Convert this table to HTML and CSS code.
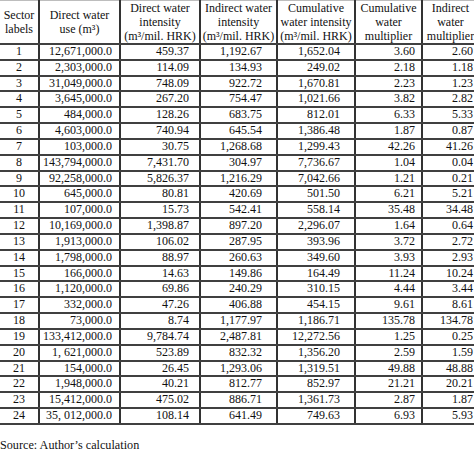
FILE: index.html
```html
<!DOCTYPE html>
<html>
<head>
<meta charset="utf-8">
<link rel="stylesheet" href="styles.css">
</head>
<body>
<div class="page">
  <div class="table-wrap">
    <table class="data">
      <colgroup>
        <col class="c1"><col class="c2"><col class="c3"><col class="c4"><col class="c5"><col class="c6"><col class="c7">
      </colgroup>
      <thead>
        <tr>
          <th>Sector<br>labels</th>
          <th>Direct water<br>use (m³)</th>
          <th>Direct water<br>intensity<br>(m³/mil. HRK)</th>
          <th>Indirect water<br>intensity<br>(m³/mil. HRK)</th>
          <th>Cumulative<br>water intensity<br>(m³/mil. HRK)</th>
          <th>Cumulative<br>water<br>multiplier</th>
          <th>Indirect<br>water<br>multiplier</th>
        </tr>
      </thead>
      <tbody>
        <tr><td>1</td><td>12,671,000.0</td><td>459.37</td><td>1,192.67</td><td>1,652.04</td><td>3.60</td><td>2.60</td></tr>
        <tr><td>2</td><td>2,303,000.0</td><td>114.09</td><td>134.93</td><td>249.02</td><td>2.18</td><td>1.18</td></tr>
        <tr><td>3</td><td>31,049,000.0</td><td>748.09</td><td>922.72</td><td>1,670.81</td><td>2.23</td><td>1.23</td></tr>
        <tr><td>4</td><td>3,645,000.0</td><td>267.20</td><td>754.47</td><td>1,021.66</td><td>3.82</td><td>2.82</td></tr>
        <tr><td>5</td><td>484,000.0</td><td>128.26</td><td>683.75</td><td>812.01</td><td>6.33</td><td>5.33</td></tr>
        <tr><td>6</td><td>4,603,000.0</td><td>740.94</td><td>645.54</td><td>1,386.48</td><td>1.87</td><td>0.87</td></tr>
        <tr><td>7</td><td>103,000.0</td><td>30.75</td><td>1,268.68</td><td>1,299.43</td><td>42.26</td><td>41.26</td></tr>
        <tr><td>8</td><td>143,794,000.0</td><td>7,431.70</td><td>304.97</td><td>7,736.67</td><td>1.04</td><td>0.04</td></tr>
        <tr><td>9</td><td>92,258,000.0</td><td>5,826.37</td><td>1,216.29</td><td>7,042.66</td><td>1.21</td><td>0.21</td></tr>
        <tr><td>10</td><td>645,000.0</td><td>80.81</td><td>420.69</td><td>501.50</td><td>6.21</td><td>5.21</td></tr>
        <tr><td>11</td><td>107,000.0</td><td>15.73</td><td>542.41</td><td>558.14</td><td>35.48</td><td>34.48</td></tr>
        <tr><td>12</td><td>10,169,000.0</td><td>1,398.87</td><td>897.20</td><td>2,296.07</td><td>1.64</td><td>0.64</td></tr>
        <tr><td>13</td><td>1,913,000.0</td><td>106.02</td><td>287.95</td><td>393.96</td><td>3.72</td><td>2.72</td></tr>
        <tr><td>14</td><td>1,798,000.0</td><td>88.97</td><td>260.63</td><td>349.60</td><td>3.93</td><td>2.93</td></tr>
        <tr><td>15</td><td>166,000.0</td><td>14.63</td><td>149.86</td><td>164.49</td><td>11.24</td><td>10.24</td></tr>
        <tr><td>16</td><td>1,120,000.0</td><td>69.86</td><td>240.29</td><td>310.15</td><td>4.44</td><td>3.44</td></tr>
        <tr><td>17</td><td>332,000.0</td><td>47.26</td><td>406.88</td><td>454.15</td><td>9.61</td><td>8.61</td></tr>
        <tr><td>18</td><td>73,000.0</td><td>8.74</td><td>1,177.97</td><td>1,186.71</td><td>135.78</td><td>134.78</td></tr>
        <tr><td>19</td><td>133,412,000.0</td><td>9,784.74</td><td>2,487.81</td><td>12,272.56</td><td>1.25</td><td>0.25</td></tr>
        <tr><td>20</td><td>1, 621,000.0</td><td>523.89</td><td>832.32</td><td>1,356.20</td><td>2.59</td><td>1.59</td></tr>
        <tr><td>21</td><td>154,000.0</td><td>26.45</td><td>1,293.06</td><td>1,319.51</td><td>49.88</td><td>48.88</td></tr>
        <tr><td>22</td><td>1,948,000.0</td><td>40.21</td><td>812.77</td><td>852.97</td><td>21.21</td><td>20.21</td></tr>
        <tr><td>23</td><td>15,412,000.0</td><td>475.02</td><td>886.71</td><td>1,361.73</td><td>2.87</td><td>1.87</td></tr>
        <tr><td>24</td><td>35, 012,000.0</td><td>108.14</td><td>641.49</td><td>749.63</td><td>6.93</td><td>5.93</td></tr>
      </tbody>
    </table>
  </div>
  <p class="source">Source: Author’s calculation</p>
</div>
</body>
</html>
```

FILE: styles.css
```css
html, body {
  margin: 0;
  padding: 0;
  background: #ffffff;
}

.page {
  width: 474px;
  height: 454px;
  overflow: hidden;
  font-family: "Liberation Serif", "Times New Roman", serif;
  color: #111111;
}

.table-wrap {
  width: 474px;
  overflow: hidden;
}

.data {
  border-collapse: collapse;
  table-layout: fixed;
  width: 478px;
  font-size: 12px;
}

.c1 { width: 39px; }
.c2 { width: 81px; }
.c3 { width: 80px; }
.c4 { width: 77px; }
.c5 { width: 78px; }
.c6 { width: 67px; }
.c7 { width: 56px; }

.data th {
  font-weight: normal;
  text-align: center;
  vertical-align: middle;
  line-height: 14px;
  height: 42px;
  padding: 0;
  border-top: 1px solid #bdbdbd;
  border-bottom: 2px solid #404040;
  border-left: 2px solid #333333;
  white-space: nowrap;
}

.data td {
  height: 13.83px;
  line-height: 13.83px;
  padding: 0;
  text-align: right;
  border-top: 2px solid #404040;
  border-bottom: 2px solid #404040;
  border-left: 2px solid #333333;
  white-space: nowrap;
}

.data th:first-child,
.data td:first-child {
  border-left: none;
}

.data td:nth-child(1) { text-align: center; }
.data td:nth-child(2) { padding-right: 7px; }
.data td:nth-child(3) { padding-right: 10px; }
.data td:nth-child(4) { padding-right: 14px; }
.data td:nth-child(5) { padding-right: 14px; }
.data td:nth-child(6) { padding-right: 6px; }
.data td:nth-child(7) { padding-right: 5px; }

.source {
  margin: 13px 0 0 0;
  font-size: 12.2px;
  line-height: 14px;
}
```
